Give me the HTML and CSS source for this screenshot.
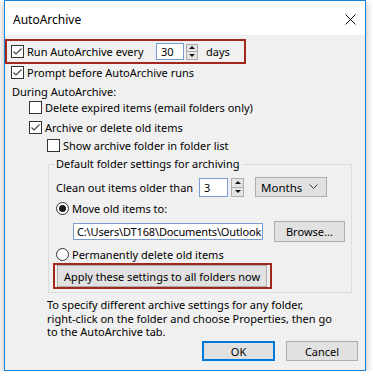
FILE: index.html
```html
<!DOCTYPE html>
<html lang="en">
<head>
    <meta charset="UTF-8">
    <title>AutoArchive</title>
    <link rel="stylesheet" href="styles.css">
</head>
<body>
    <div class="window">
        <div class="titlebar">
            <span class="title">AutoArchive</span>
            <svg class="close" width="11" height="11" viewBox="0 0 11 11"><path d="M0.5 0.5L10.5 10.5M10.5 0.5L0.5 10.5"/></svg>
        </div>
        <div class="content">
            <!-- highlighted option -->
            <div class="flag">
                <span class="box"><svg width="11" height="11" viewBox="0 0 11 11"><path d="M1.5 5.5L4 8L9.5 2.5"/></svg></span>
                <span class="every-label">Run AutoArchive every</span>
                <span class="field days-field">30</span>
                <span class="arrows small"><span class="up"></span><span class="down"></span></span>
                <span class="unit">days</span>
            </div>
            <div class="row prompt">
                <span class="box"><svg width="11" height="11" viewBox="0 0 11 11"><path d="M1.5 5.5L4 8L9.5 2.5"/></svg></span>
                <span>Prompt before AutoArchive runs</span>
            </div>
            <div class="row during">During AutoArchive:</div>
            <div class="row expired">
                <span class="box"></span>
                <span>Delete expired items (email folders only)</span>
            </div>
            <div class="row old">
                <span class="box"><svg width="11" height="11" viewBox="0 0 11 11"><path d="M1.5 5.5L4 8L9.5 2.5"/></svg></span>
                <span>Archive or delete old items</span>
            </div>
            <div class="row show">
                <span class="box"></span>
                <span>Show archive folder in folder list</span>
            </div>

            <fieldset class="group">
                <legend>Default folder settings for archiving</legend>
                <div class="row clean">
                    <span class="clean-label">Clean out items older than</span>
                    <span class="field months-field">3</span>
                    <span class="arrows"><span class="up"></span><span class="down"></span></span>
                    <span class="select">Months
                        <svg width="9" height="6" viewBox="0 0 9 6"><path d="M0.5 0.5L4.5 4.5L8.5 0.5"/></svg>
                    </span>
                </div>
                <div class="row move">
                    <span class="radio on"></span>
                    <span>Move old items to:</span>
                </div>
                <div class="row path">
                    <span class="field path-field">C:\Users\DT168\Documents\Outlook</span>
                    <span class="btn browse">Browse...</span>
                </div>
                <div class="row perm">
                    <span class="radio"></span>
                    <span>Permanently delete old items</span>
                </div>
                <div class="flag apply">
                    <span class="btn">Apply these settings to all folders now</span>
                </div>
            </fieldset>

            <p class="note">To specify different archive settings for any folder,<br>right-click on the folder and choose Properties, then go<br>to the AutoArchive tab.</p>

            <div class="actions">
                <span class="btn ok">OK</span>
                <span class="btn cancel">Cancel</span>
            </div>
        </div>
    </div>
</body>
</html>
```

FILE: styles.css
```css
* {
    box-sizing: border-box;
}
body {
    margin: 0;
    background: #fff;
    font-family: "Noto Sans", sans-serif;
    font-size: 11px;
    color: #000;
}
.window {
    width: 362px;
    height: 371px;
    margin-left: 4px;
    border: 1px solid #1883d7;
    background: #f0f0f0;
    box-shadow: 0 2px 8px rgba(0, 0, 0, 0.3);
    display: flex;
    flex-direction: column;
}
.titlebar {
    height: 34px;
    flex: none;
    background: #fff;
    display: flex;
    align-items: center;
    justify-content: space-between;
    padding: 3px 9px 0 8px;
}
.title {
    font-size: 12px;
}
.close path {
    stroke: #111;
    stroke-width: 1;
    fill: none;
}
.content {
    padding: 4px 7px 0 0;
    display: flex;
    flex-direction: column;
}

/* red highlight boxes */
.flag {
    border: 2px solid #a3271b;
    display: flex;
    align-items: center;
}
.content > .flag {
    width: 241px;
    height: 25px;
    padding-left: 4px;
}

.row {
    display: flex;
    align-items: center;
    white-space: nowrap;
}
.prompt { height: 16px; padding-left: 6px; }
.during { height: 18px; margin-top: 2px; padding-left: 7px; }
.expired { height: 15px; padding-left: 24px; }
.old { height: 18px; margin-top: 3px; padding-left: 24px; }
.show { height: 19px; padding-left: 42px; }

/* checkbox & radio */
.box {
    width: 13px;
    height: 13px;
    flex: none;
    border: 1px solid #333;
    background: #fff;
    margin-right: 3px;
    display: flex;
}
.box path {
    stroke: #444;
    stroke-width: 1.1;
    fill: none;
}
.radio {
    width: 13px;
    height: 13px;
    flex: none;
    border: 1px solid #333;
    border-radius: 50%;
    background: #fff;
    margin-right: 3px;
    display: flex;
    align-items: center;
    justify-content: center;
}
.radio.on::after {
    content: "";
    width: 7px;
    height: 7px;
    border-radius: 50%;
    background: #1a1a1a;
}

/* text fields and spinners */
.every-label {
    width: 129px;
}
.field {
    background: #fff;
    border: 1px solid #7a9bd0;
    display: flex;
    align-items: center;
    padding-left: 4px;
    overflow: hidden;
    white-space: nowrap;
}
.days-field {
    width: 28px;
    height: 17px;
}
.arrows {
    width: 13px;
    height: 19px;
    margin-left: 3px;
    border: 1px solid #adadad;
    background: #e5e5e5;
    display: flex;
    flex-direction: column;
}
.arrows.small {
    width: 12px;
    height: 16px;
    margin-left: 2px;
}
.arrows .up, .arrows .down {
    flex: 1;
    display: flex;
    align-items: center;
    justify-content: center;
}
.arrows .down {
    border-top: 1px solid #adadad;
}
.arrows .up::after {
    content: "";
    border-left: 3px solid transparent;
    border-right: 3px solid transparent;
    border-bottom: 3px solid #111;
}
.arrows .down::after {
    content: "";
    border-left: 3px solid transparent;
    border-right: 3px solid transparent;
    border-top: 3px solid #111;
}
.unit {
    margin-left: 8px;
}

/* group box */
.group {
    margin: 0 6px 0 43px;
    border: 1px solid #dcdcdc;
    padding: 0 6px 3px 7px;
    min-width: 0;
}
.group legend {
    padding: 0 2px;
    margin-left: -2px;
    line-height: 18px;
}
.clean {
    height: 20px;
    margin-top: 4px;
}
.clean-label {
    width: 143px;
}
.months-field {
    width: 29px;
    height: 19px;
}
.select {
    width: 72px;
    height: 20px;
    margin-left: 11px;
    border: 1px solid #adadad;
    background: #e1e1e1;
    display: flex;
    align-items: center;
    justify-content: space-between;
    padding: 0 8px 0 5px;
    font-size: 11.5px;
}
.select path {
    stroke: #333;
    fill: none;
}
.move {
    height: 17px;
    margin-top: 3px;
}
.path {
    height: 21px;
    margin-top: 4px;
    padding-left: 17px;
}
.path-field {
    width: 192px;
    height: 17px;
    padding-left: 3px;
    letter-spacing: -0.15px;
}
.perm {
    height: 18px;
    margin-top: 3px;
}

/* buttons */
.btn {
    background: #e1e1e1;
    border: 1px solid #adadad;
    display: flex;
    align-items: center;
    justify-content: center;
    white-space: nowrap;
}
.browse {
    width: 72px;
    height: 21px;
    margin-left: 11px;
}
.group .apply {
    width: 219px;
    height: 26px;
    margin-left: -3px;
    padding: 0 3px 0 2px;
}
.apply .btn {
    width: 100%;
    height: 22px;
}
.note {
    margin: 5px 0 0 0;
    padding-left: 42px;
    line-height: 13.5px;
    white-space: nowrap;
}
.actions {
    display: flex;
    justify-content: flex-end;
    gap: 11px;
    margin-top: 2.5px;
}
.actions .btn {
    height: 20px;
}
.ok {
    width: 73px;
    border: 2px solid #0078d7;
}
.cancel {
    width: 72px;
}
```
